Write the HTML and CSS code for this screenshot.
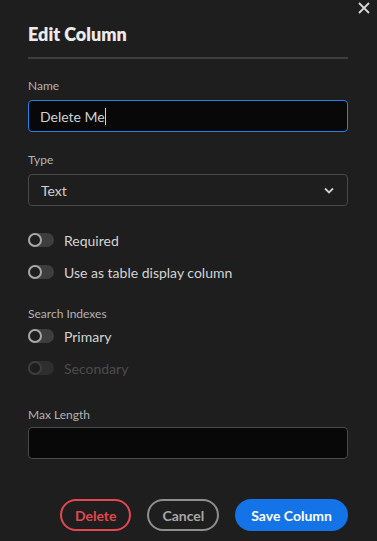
FILE: index.html
```html
<!DOCTYPE html>
<html>
<head>
<meta charset="utf-8">
<link rel="stylesheet" href="styles.css">
</head>
<body>
<div class="dialog">
  <button class="close" aria-label="Close">
    <svg width="12" height="12" viewBox="0 0 12 12"><path d="M1 1 L11 11 M11 1 L1 11" stroke="#d8d8d8" stroke-width="1.8" fill="none"/></svg>
  </button>
  <h1 class="title">Edit Column</h1>
  <div class="divider"></div>

  <div class="field">
    <label class="label">Name</label>
    <div class="input focused"><span class="value">Delete Me</span><span class="caret"></span></div>
  </div>

  <div class="field type-field">
    <label class="label">Type</label>
    <div class="select">
      <span class="value">Text</span>
      <svg class="chevron" width="10" height="7" viewBox="0 0 10 7"><path d="M1 1.5 L5 5.5 L9 1.5" stroke="#cfcfcf" stroke-width="1.8" fill="none"/></svg>
    </div>
  </div>

  <div class="switches">
    <div class="switch-row"><span class="switch"><span class="knob"></span></span><span class="switch-label">Required</span></div>
    <div class="switch-row"><span class="switch"><span class="knob"></span></span><span class="switch-label">Use as table display column</span></div>
  </div>

  <div class="indexes">
    <div class="label">Search Indexes</div>
    <div class="switch-row"><span class="switch"><span class="knob"></span></span><span class="switch-label">Primary</span></div>
    <div class="switch-row disabled"><span class="switch"><span class="knob"></span></span><span class="switch-label">Secondary</span></div>
  </div>

  <div class="field maxlen">
    <label class="label">Max Length</label>
    <div class="input"></div>
  </div>

  <div class="actions">
    <button class="btn btn-delete">Delete</button>
    <button class="btn btn-cancel">Cancel</button>
    <button class="btn btn-save">Save Column</button>
  </div>
</div>
</body>
</html>
```

FILE: styles.css
```css
html, body {
  margin: 0;
  padding: 0;
  background: #1e1e1e;
}
body {
  font-family: "Lato", "Open Sans", sans-serif;
  color: #d4d4d4;
}
.dialog {
  position: relative;
  width: 320px;
  padding: 23px 29px 0 28px;
}
.close {
  position: absolute;
  top: 2px;
  right: 7px;
  background: none;
  border: none;
  padding: 0;
  width: 12px;
  height: 12px;
}
.close svg { display: block; }
.title {
  margin: 0;
  font-size: 18px;
  line-height: 22px;
  font-weight: 800;
  color: #ebebeb;
}
.divider {
  height: 2px;
  background: #3e3e3e;
  margin-top: 12px;
}
.label {
  display: block;
  font-size: 12px;
  line-height: 15px;
  color: #b3b3b3;
}
.field { margin-top: 19px; }
.field .label { margin-bottom: 7px; }
.input {
  box-sizing: border-box;
  height: 32px;
  border: 1px solid #4a4a4a;
  border-radius: 4px;
  background: #080808;
  display: flex;
  align-items: center;
  padding: 0 11px;
  font-size: 14px;
  color: #d0d0d0;
}
.input.focused { border-color: #2680eb; }
.caret {
  display: inline-block;
  width: 1px;
  height: 17px;
  background: #d0d0d0;
}
.type-field { margin-top: 20px; }
.select {
  box-sizing: border-box;
  height: 32px;
  border: 1px solid #4a4a4a;
  border-radius: 4px;
  background: #1e1e1e;
  display: flex;
  align-items: center;
  justify-content: space-between;
  padding: 0 13px 0 12px;
  font-size: 14px;
  color: #d0d0d0;
}
.switches { margin-top: 18px; }
.switch-row {
  display: flex;
  align-items: center;
  height: 32px;
  gap: 10px;
}
.switch {
  position: relative;
  width: 26px;
  height: 14px;
  border-radius: 7px;
  background: #3e3e3e;
}
.knob {
  position: absolute;
  left: 0;
  top: 0;
  box-sizing: border-box;
  width: 14px;
  height: 14px;
  border-radius: 50%;
  border: 2px solid #a8a8a8;
  background: #1e1e1e;
}
.switch-label {
  font-size: 14px;
  color: #d4d4d4;
}
.disabled .switch { background: #2e2e2e; }
.disabled .knob { border-color: #3e3e3e; }
.disabled .switch-label { color: #4c4c4c; }
.indexes { margin-top: 18px; }
.indexes .label { margin-bottom: -1px; }
.maxlen { margin-top: 23px; }
.maxlen .label { margin-bottom: 5px; }
.actions {
  display: flex;
  justify-content: flex-end;
  gap: 16px;
  margin-top: 40px;
}
.btn {
  box-sizing: border-box;
  height: 32px;
  border-radius: 16px;
  font-family: inherit;
  font-size: 14px;
  font-weight: 700;
  padding: 0 13px;
  background: transparent;
}
.btn-delete {
  border: 2px solid #e34850;
  color: #e34850;
}
.btn-cancel {
  border: 2px solid #8e8e8e;
  color: #a8a8a8;
}
.btn-save {
  border: none;
  background: #1473e6;
  color: #ffffff;
  padding: 0 16px;
}
```
